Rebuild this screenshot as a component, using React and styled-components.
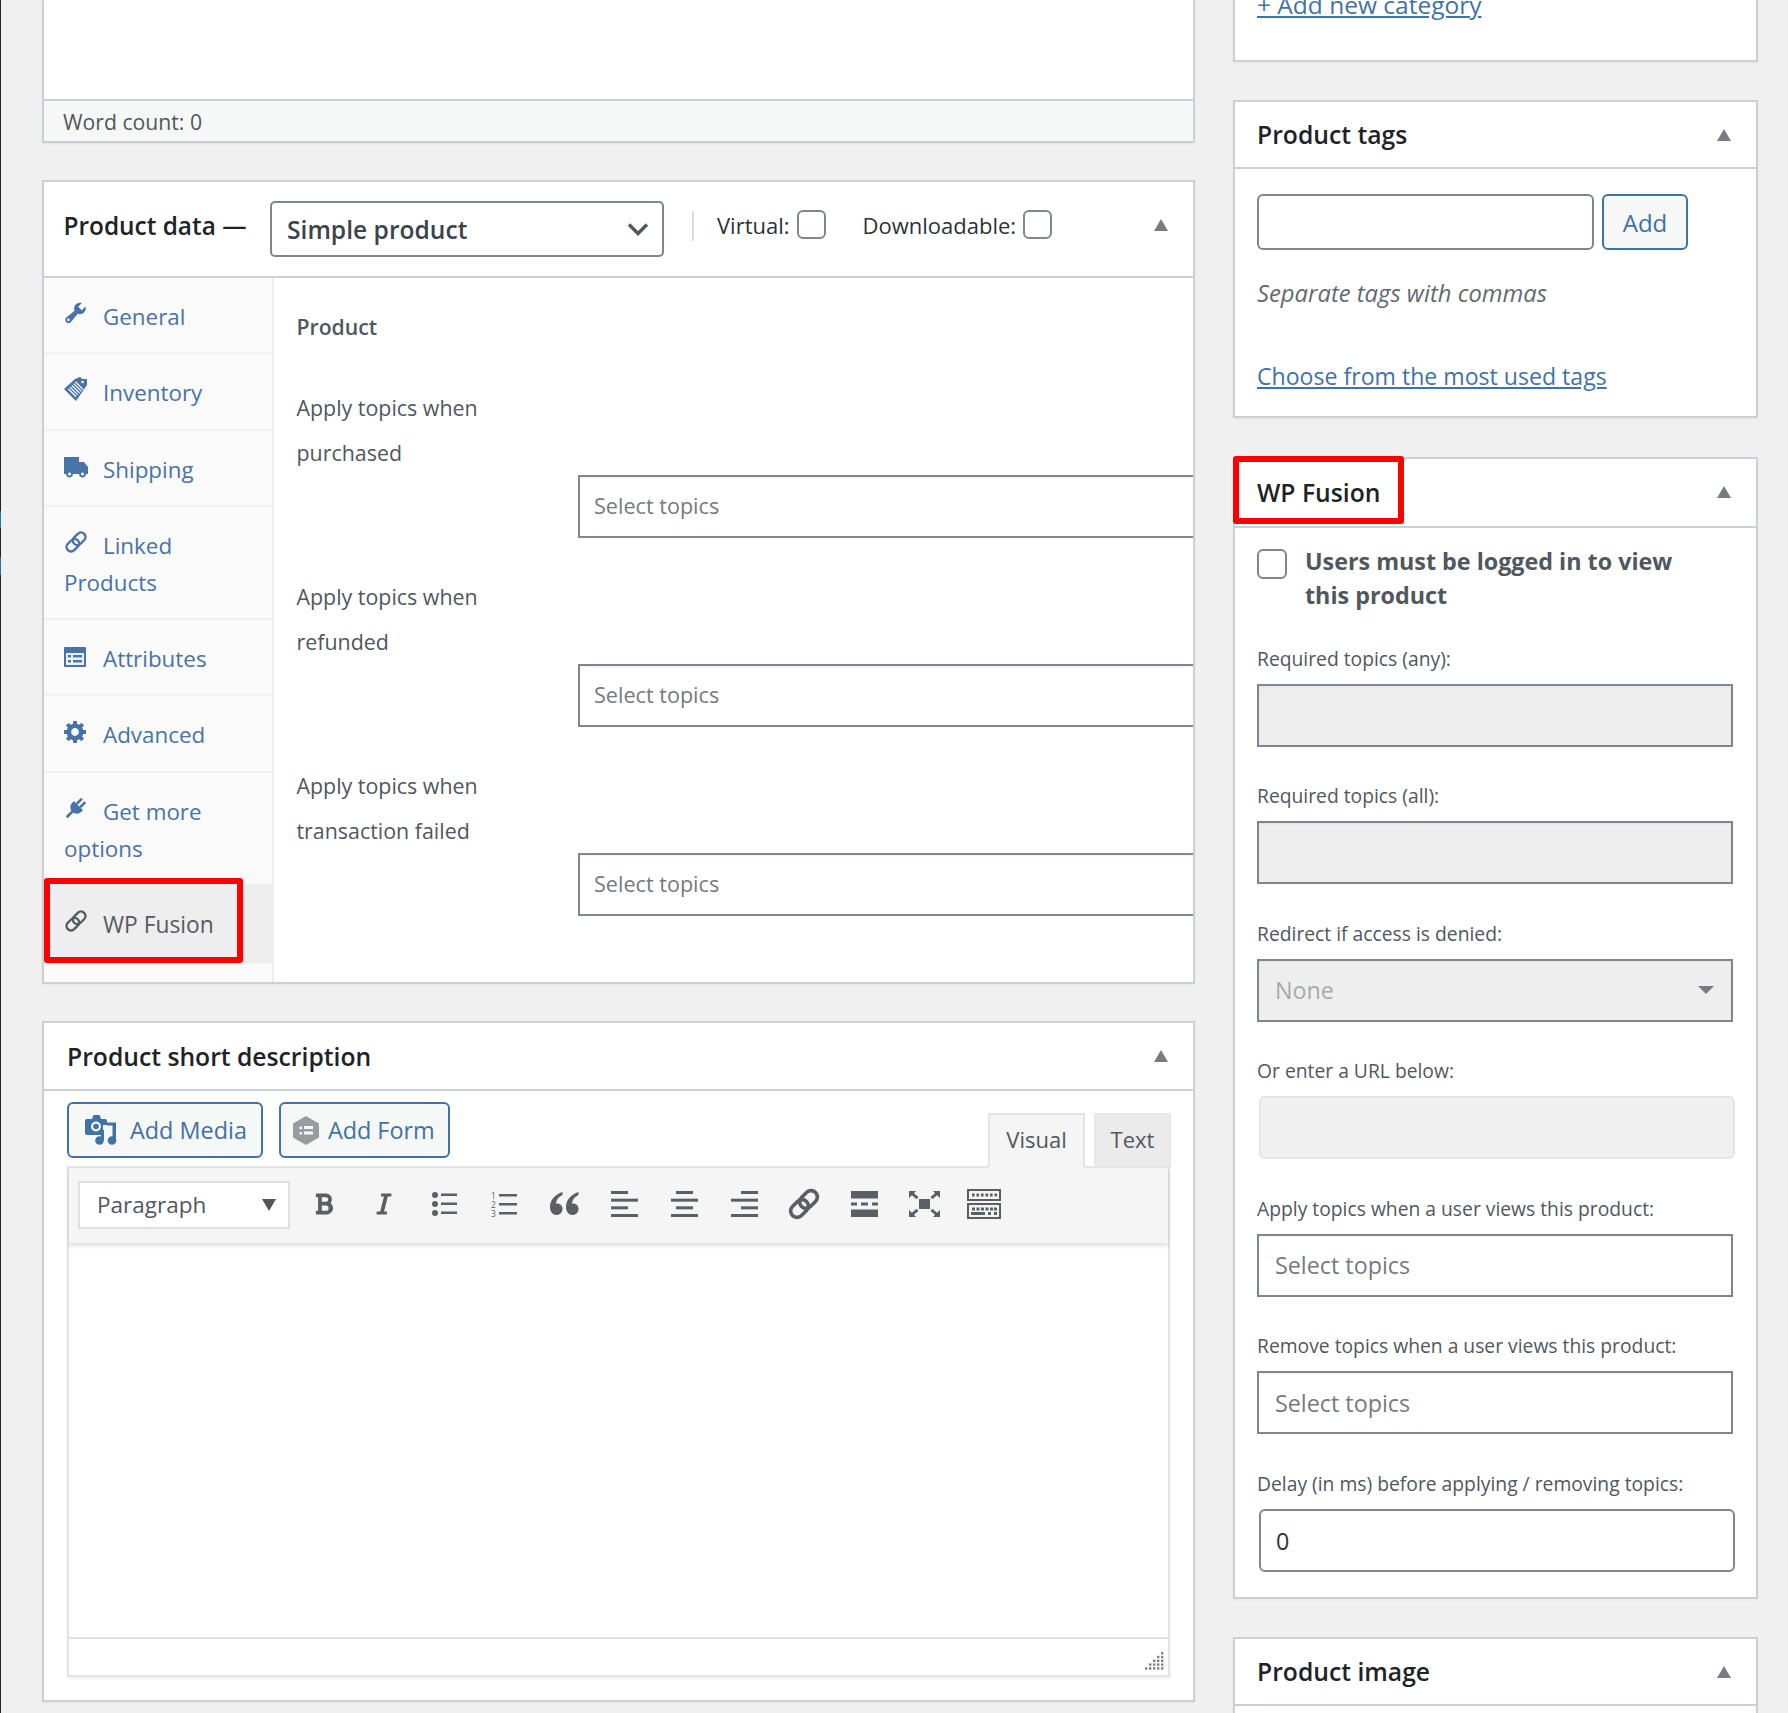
import React from 'react';
import styled, { createGlobalStyle } from 'styled-components';
import { FaBold, FaItalic } from 'react-icons/fa';

const blue = '#3f72a6';
const tabBlue = '#4873a8';
const line = '#ccd0d4';
const field = '#81858f';
const soft = '#e2e3e4';

const GlobalStyle = createGlobalStyle`
  html, body { margin: 0; padding: 0; background: #f0f0f1; }
  body { font-family: "Open Sans", "Noto Sans", sans-serif; color: #50575e; }
  * { box-sizing: border-box; }
`;

const Page = styled.div`
  display: flex;
  width: 1788px;
  height: 1713px;
  overflow: hidden;
  background: #f0f0f1;
`;
const Rail = styled.div`
  display: flex;
  flex-direction: column;
  width: 1px;
  flex: none;
`;
const RailPart = styled.div`
  height: ${p => p.$h}px;
  background: ${p => p.$c};
`;
const MainCol = styled.div`
  width: 1153px;
  margin-left: 41px;
  flex: none;
`;
const SideCol = styled.div`
  width: 525px;
  margin-left: 38px;
  flex: none;
`;
const Panel = styled.section`
  position: relative;
  background: #fff;
  border: 2px solid ${line};
  box-shadow: 0 1px 2px rgba(0, 0, 0, .05);
  margin-bottom: ${p => p.$gap ?? 37}px;
`;
const TopPanel = styled(Panel)`
  border-top: 0;
`;
const BlankEditor = styled.div`
  height: 99px;
  background: #fff;
`;
const WordCount = styled.div`
  height: 42px;
  display: flex;
  align-items: center;
  padding-left: 19px;
  background: #f6f7f7;
  border-top: 2px solid ${line};
  font-size: 21.2px;
  color: #50575e;
`;
const PanelHeader = styled.header`
  display: flex;
  align-items: center;
  justify-content: space-between;
  height: ${p => p.$h}px;
  padding: 0 25px 0 ${p => p.$pl}px;
  box-sizing: content-box;
  border-bottom: 2px solid ${line};
`;
const Title = styled.h2`
  margin: 0;
  padding-top: 1px;
  font-size: 24.7px;
  font-weight: 600;
  color: #1d2327;
  line-height: 32px;
`;
const Triangle = styled.span`
  display: block;
  flex: none;
  width: 0;
  height: 0;
  border-left: ${p => p.$w / 2}px solid transparent;
  border-right: ${p => p.$w / 2}px solid transparent;
  ${p => (p.$down ? 'border-top' : 'border-bottom')}: ${p => p.$t}px solid ${p => p.$c || '#787c82'};
`;
const DataHeader = styled.header`
  display: flex;
  align-items: center;
  height: 94px;
  padding-left: 19.5px;
  box-sizing: content-box;
  border-bottom: 2px solid ${line};
`;
const DataTitle = styled(Title)`
  width: 206.5px;
  flex: none;
  margin-bottom: 6px;
  padding-top: 0;
  font-size: 24.4px;
`;
const TypeSelect = styled.div`
  display: flex;
  align-items: center;
  justify-content: space-between;
  width: 394px;
  height: 56px;
  flex: none;
  padding: 0 13px 0 15px;
  border: 2px solid ${field};
  border-radius: 5px;
  font-size: 24.6px;
  font-weight: 600;
  color: #3c434a;
`;
const Divider = styled.span`
  width: 2px;
  height: 30px;
  flex: none;
  margin: 0 23px 6px 28px;
  background: #dcdcde;
`;
const CheckGroup = styled.label`
  display: flex;
  align-items: center;
  flex: none;
  margin: 0 37px 9px 0;
  font-size: 22px;
  font-weight: 500;
  color: #2c3338;
`;
const CheckBox = styled.input.attrs({ type: 'checkbox' })`
  appearance: none;
  width: ${p => p.$s || 29}px;
  height: ${p => p.$s || 29}px;
  flex: none;
  margin: 0;
  background: #fff;
  border: 2px solid ${field};
  border-radius: 6px;
`;
const VirtualCheck = styled(CheckBox)`
  margin-left: 7px;
`;
const DataToggle = styled.div`
  margin: 0 25px 9px auto;
`;
const DataBody = styled.div`
  display: flex;
  height: 704px;
`;
const Tabs = styled.nav`
  width: 230px;
  flex: none;
  background: #fafafa;
  border-right: 2px solid #eeeeee;
`;
const Tab = styled.div`
  position: relative;
  padding: ${p => (p.$active ? '22px 20px 20px' : '20px 20px 17.3px')};
  background: ${p => (p.$active ? '#eeeeee' : 'transparent')};
  border-bottom: ${p => (p.$last ? '0' : '2px solid #f0f0f0')};
  font-size: ${p => (p.$active ? '22.8px' : '22.4px')};
  line-height: 37px;
  color: ${p => (p.$active ? '#555b61' : tabBlue)};
  margin-right: ${p => (p.$active ? '-2px' : '0')};
`;
const TabIcon = styled.span`
  display: inline-flex;
  align-items: center;
  width: 39px;
  height: 26px;
  vertical-align: 0;
  margin-top: -6px;
`;
const Highlight = styled.span`
  position: absolute;
  border: 6.5px solid #ff0000;
  border-radius: 3px;
  pointer-events: none;
  left: ${p => p.$l}px;
  top: ${p => p.$t}px;
  width: ${p => p.$w}px;
  height: ${p => p.$h}px;
`;
const DataContent = styled.div`
  flex: 1;
  padding-left: 22.5px;
`;
const ContentTitle = styled.h3`
  margin: 30px 0 40px;
  font-size: 21.2px;
  line-height: 38px;
  font-weight: 600;
  color: #50575e;
`;
const TopicRow = styled.div`
  display: grid;
  grid-template-columns: 281.5px 1fr;
  grid-template-rows: 89px 63px;
  margin-bottom: 37px;
`;
const TopicLabel = styled.div`
  grid-column: 1;
  grid-row: 1;
  font-size: 21.4px;
  line-height: 44.6px;
  color: #50575e;
`;
const TopicInput = styled.div`
  grid-column: 2;
  grid-row: 2;
  display: flex;
  align-items: center;
  padding: 0 0 2px 14px;
  border: 2px solid ${field};
  border-right: 0;
  font-size: 21.6px;
  color: #757a80;
  box-shadow: inset 0 1px 2px rgba(0, 0, 0, .06);
`;
const ShortBody = styled.div`
  padding: 11px 23px 23px 23px;
`;
const EditorTools = styled.div`
  display: flex;
  justify-content: space-between;
  align-items: flex-start;
  height: 64px;
`;
const ButtonRow = styled.div`
  display: flex;
  gap: 16px;
`;
const MediaButton = styled.button`
  display: inline-flex;
  align-items: center;
  height: 56px;
  padding: 0 ${p => p.$pr}px 0 ${p => p.$pl}px;
  gap: ${p => p.$gap}px;
  background: #f6f7f7;
  border: 2px solid ${blue};
  border-radius: 6px;
  font-family: inherit;
  font-size: 23.4px;
  color: ${blue};
`;
const ModeTabs = styled.div`
  position: relative;
  z-index: 1;
  display: flex;
  gap: 9px;
  margin: 11px -1px 0 0;
`;
const ModeTab = styled.div`
  display: flex;
  align-items: center;
  justify-content: center;
  width: ${p => p.$w}px;
  height: 55px;
  padding-bottom: 3px;
  font-size: 22px;
  color: #50575e;
  background: ${p => (p.$on ? '#f5f5f5' : '#ebebeb')};
  border: 2px solid ${p => (p.$on ? soft : '#e8e8e8')};
  border-bottom-color: ${p => (p.$on ? '#f5f5f5' : soft)};
`;
const EditorFrame = styled.div`
  border: 2px solid ${soft};
  box-shadow: 0 2px 3px rgba(0, 0, 0, .06);
`;
const Toolbar = styled.div`
  position: relative;
  display: flex;
  align-items: center;
  height: 75px;
  padding: 0 0 2px 9px;
  background: #f5f5f5;
  box-shadow: 0 3px 4px rgba(0, 0, 0, .13);
`;
const FormatSelect = styled.div`
  display: flex;
  align-items: center;
  justify-content: space-between;
  width: 212px;
  height: 48px;
  flex: none;
  margin-right: 4px;
  padding: 0 12px 0 17px;
  background: #fff;
  border: 2px solid #dfdfdf;
  font-size: 22.5px;
  color: #50575e;
`;
const ToolIcon = styled.span`
  display: flex;
  align-items: center;
  justify-content: center;
  width: 60px;
  height: 36px;
  flex: none;
  margin-bottom: 2px;
  color: #5a5f66;
`;
const EditorArea = styled.div`
  height: 394px;
  background: #fff;
`;
const StatusBar = styled.div`
  display: flex;
  justify-content: flex-end;
  align-items: flex-end;
  height: 38px;
  padding: 0 4px 5px 0;
  background: #fff;
  border-top: 2px solid ${soft};
`;
const AddCategory = styled.a`
  display: block;
  margin: -14px 0 0 22px;
  height: 74px;
  font-size: 24.5px;
  line-height: 37px;
  color: ${blue};
  text-decoration: underline;
`;
const TagsBody = styled.div`
  padding: 25px 0 21px 22px;
`;
const TagRow = styled.div`
  display: flex;
  gap: 8px;
`;
const TagInput = styled.div`
  width: 337px;
  height: 56px;
  border: 2px solid ${field};
  border-radius: 6px;
  background: #fff;
`;
const AddButton = styled.button`
  width: 86px;
  height: 56px;
  padding: 0;
  font-family: inherit;
  font-size: 24px;
  color: ${blue};
  background: #f6f7f7;
  border: 2px solid ${blue};
  border-radius: 6px;
`;
const Hint = styled.p`
  margin: 24.5px 0 0;
  font-size: 23.8px;
  line-height: 37px;
  font-style: italic;
  color: #646970;
`;
const TagsLink = styled.a`
  display: block;
  margin-top: 46px;
  font-size: 23.1px;
  line-height: 37px;
  color: ${blue};
  text-decoration: underline;
`;
const FusionBody = styled.div`
  padding: 16px 20px 25px 22px;
`;
const LoginRow = styled.label`
  display: flex;
  gap: 18px;
  margin-bottom: 34px;
  font-size: 23.3px;
  font-weight: 700;
  line-height: 34px;
  color: #50575e;
`;
const LoginCheck = styled(CheckBox)`
  margin-top: 5px;
`;
const Field = styled.div`
  margin-bottom: 36.6px;
  &:last-child { margin-bottom: 0; }
`;
const FieldLabel = styled.div`
  height: 26px;
  margin-bottom: 12px;
  font-size: 19.3px;
  line-height: 26px;
  white-space: nowrap;
  color: #50575e;
`;
const BoxField = styled.div`
  display: flex;
  align-items: center;
  justify-content: space-between;
  width: 476px;
  height: 63px;
  padding: 0 17px 0 16px;
  background: ${p => (p.$off ? '#eeeeee' : '#fff')};
  border: 2px solid ${field};
  font-size: 23.3px;
  color: ${p => (p.$off ? '#a7aaad' : '#757a80')};
  box-shadow: inset 0 1px 2px rgba(0, 0, 0, .05);
`;
const RoundField = styled.div`
  display: flex;
  align-items: center;
  width: 476px;
  height: 63px;
  margin-left: 2px;
  padding-left: 15px;
  background: ${p => (p.$off ? '#f0f0f1' : '#fff')};
  border: 2px solid ${p => (p.$off ? '#e3e4e5' : field)};
  border-radius: 6px;
  font-size: 23.3px;
  color: #2c3338;
`;
const ImageBody = styled.div`
  height: 40px;
`;

const Svg = ({ w, h, vb, children, color = 'currentColor' }) => (
  <svg width={w} height={h} viewBox={vb || `0 0 ${w} ${h}`} fill={color} xmlns="http://www.w3.org/2000/svg">
    {children}
  </svg>
);

const Chain = ({ s, sw = 2.4, c = tabBlue }) => (
  <svg width={s} height={s} viewBox="0 0 24 24" fill="none" stroke={c} strokeWidth={sw}>
    <g transform="rotate(-45 12 12)">
      <rect x="0.5" y="7.5" width="14" height="9" rx="4.5" />
      <rect x="9.5" y="7.5" width="14" height="9" rx="4.5" />
    </g>
  </svg>
);
const Wrench = () => (
  <Svg w={23} h={23} vb="1 2 18 17" color={tabBlue}>
    <path d="M16.68 9.77c-1.34 1.34-3.3 1.67-4.95.99l-5.41 6.52c-.99.99-2.59.99-3.58 0s-.99-2.59 0-3.58l6.52-5.42c-.68-1.65-.35-3.61.99-4.95 1.28-1.28 3.12-1.62 4.72-1.06l-2.89 2.89 2.82 2.82 2.86-2.87c.53 1.58.18 3.39-1.08 4.66zM3.81 16.21c.4.39 1.04.39 1.43 0 .4-.4.4-1.04 0-1.43-.39-.4-1.03-.4-1.43 0-.39.39-.39 1.03 0 1.43z" />
  </Svg>
);
const InventoryIcon = () => (
  <Svg w={24} h={24} color={tabBlue}>
    <path d="M0 12 11 2l5-2 2.500 2H23v6L12 24z" />
    <g transform="rotate(45 11.500 12.500)" fill="#fff">
      <rect x="6" y="6.500" width="11" height="1.300" />
      <rect x="6" y="9" width="11" height="1.300" />
      <rect x="6" y="11.500" width="11" height="1.300" />
      <rect x="6" y="14" width="11" height="1.300" />
      <rect x="6" y="16.500" width="11" height="1.300" />
    </g>
    <circle cx="18.500" cy="5" r="1.300" fill="#fff" />
  </Svg>
);
const Truck = () => (
  <Svg w={24} h={21} color={tabBlue}>
    <path d="M0 0h15v5h5l4 5v7H0z" />
    <circle cx="5.500" cy="17" r="3.400" />
    <circle cx="18.500" cy="17" r="3.400" />
    <circle cx="5.500" cy="17" r="1.600" fill="#fff" />
    <circle cx="18.500" cy="17" r="1.600" fill="#fff" />
  </Svg>
);
const AttributesIcon = () => (
  <Svg w={22} h={20} color={tabBlue}>
    <rect width="22" height="20" rx="1" />
    <rect x="2" y="6" width="18" height="12" fill="#eaf0f6" />
    <rect x="4" y="8" width="3" height="2.400" />
    <rect x="4" y="13" width="3" height="2.400" />
    <rect x="9" y="8" width="9" height="2.400" />
    <rect x="9" y="13" width="9" height="2.400" />
  </Svg>
);
const Gear = () => (
  <Svg w={22} h={22} vb="1 2 17 17" color={tabBlue}>
    <path d="M18 12h-2.180c-.17.7-.44 1.350-.81 1.930l1.540 1.540-2.100 2.100-1.540-1.540c-.58.36-1.230.63-1.910.79V19H8v-2.180c-.68-.16-1.330-.43-1.910-.79l-1.540 1.540-2.120-2.120 1.540-1.540c-.36-.58-.63-1.230-.79-1.910H1V9.030h2.170c.16-.7.44-1.350.8-1.940L2.430 5.550l2.100-2.100 1.540 1.540c.58-.37 1.240-.64 1.930-.81V2h3v2.180c.68.16 1.330.43 1.910.79l1.540-1.540 2.120 2.120-1.540 1.540c.36.59.64 1.240.8 1.940H18V12zm-8.500 1.500c1.660 0 3-1.340 3-3s-1.340-3-3-3-3 1.340-3 3 1.340 3 3 3z" />
  </Svg>
);
const Plug = () => (
  <Svg w={23} h={23} vb="-2 -2 25 25" color={tabBlue}>
    <g transform="rotate(45 10.500 10.500)">
      <rect x="6.500" y="-2" width="2.800" height="8" />
      <rect x="11.700" y="-2" width="2.800" height="8" />
      <path d="M3.500 6h14v2.500a7 7 0 0 1-14 0z" />
      <rect x="9" y="14" width="3" height="10" />
    </g>
  </Svg>
);
const MediaIcon = () => (
  <Svg w={32} h={30} color={blue}>
    <path d="M2 4h5l1.500-4h6l1.500 4h4a2 2 0 0 1 2 2v12a2 2 0 0 1-2 2H2a2 2 0 0 1-2-2V6a2 2 0 0 1 2-2z" />
    <circle cx="11" cy="11.500" r="5" fill="#f6f7f7" />
    <circle cx="11" cy="11.500" r="2.800" />
    <path d="M18 10h14v20h-6l-2-5h-6z" fill="#f6f7f7" />
    <rect x="27.500" y="8" width="3.500" height="18" />
    <rect x="22" y="7.500" width="9" height="3" />
    <circle cx="27" cy="25.500" r="4.300" />
    <circle cx="14.500" cy="25.500" r="4.300" />
    <rect x="16" y="15" width="3" height="10" />
  </Svg>
);
const FormIcon = () => (
  <Svg w={26} h={29} color="#999b9e">
    <path d="M13 0l13 7.500v14L13 29 0 21.500v-14z" />
    <rect x="6.500" y="10.500" width="2.500" height="2.500" fill="#f6f7f7" />
    <rect x="6.500" y="16" width="2.500" height="2.500" fill="#f6f7f7" />
    <rect x="11" y="10" width="9" height="3" fill="#f6f7f7" />
    <rect x="11" y="15.500" width="9" height="3" fill="#f6f7f7" />
  </Svg>
);
const Chevron = () => (
  <svg width="22" height="14" viewBox="0 0 22 14" fill="none" stroke="#50575e" strokeWidth="3.400">
    <path d="M2 2.500l9 9 9-9" />
  </svg>
);
const Bars = ({ rows }) => (
  <Svg w={27} h={26}>
    {rows.map(([x, w], i) => (
      <rect key={i} x={x} y={i * 7.670} width={w} height={3} />
    ))}
  </Svg>
);
const ListU = () => (
  <Svg w={25} h={24}>
    <circle cx="3" cy="3" r="3" />
    <circle cx="3" cy="12" r="3" />
    <circle cx="3" cy="21" r="3" />
    <rect x="9" y="1.500" width="16" height="2.500" />
    <rect x="9" y="10.500" width="16" height="2.500" />
    <rect x="9" y="19.500" width="16" height="2.500" />
  </Svg>
);
const ListO = () => (
  <Svg w={26} h={26}>
    <text x="0" y="7.500" fontSize="8.500" fontFamily="Open Sans, sans-serif">1</text>
    <text x="0" y="16.500" fontSize="8.500" fontFamily="Open Sans, sans-serif">2</text>
    <text x="0" y="25.500" fontSize="8.500" fontFamily="Open Sans, sans-serif">3</text>
    <rect x="8" y="3" width="18" height="2.500" />
    <rect x="8" y="12" width="18" height="2.500" />
    <rect x="8" y="21" width="18" height="2.500" />
  </Svg>
);
const Quote = () => (
  <Svg w={29} h={23}>
    <path d="M12.500 0C5 2.500 0 8 0 15c0 4.500 2.600 8 6.500 8 3.300 0 6-2.500 6-6 0-3.200-2.200-5.500-5.200-5.500-.7 0-1.200.1-1.500.2C6.500 7.500 9 4.500 12.500 3z" />
    <path d="M28.500 0C21 2.500 16 8 16 15c0 4.500 2.600 8 6.500 8 3.300 0 6-2.500 6-6 0-3.200-2.200-5.500-5.200-5.500-.7 0-1.200.1-1.500.2.700-4.200 3.200-7.200 6.700-8.700z" />
  </Svg>
);
const More = () => (
  <Svg w={27} h={26}>
    <rect width="27" height="7.500" />
    <rect y="11.500" width="6" height="3" />
    <rect x="10" y="11.500" width="7" height="3" />
    <rect x="21" y="11.500" width="6" height="3" />
    <rect y="18.500" width="27" height="7.500" />
  </Svg>
);
const FullScreen = () => (
  <Svg w={31} h={26}>
    <rect x="10" y="8" width="11" height="10" />
    <path d="M0 0h7L5 2.300l4.500 3.800-2 2.100L3 4.300 0 7zM31 0h-7l2 2.300-4.500 3.800 2 2.100L28 4.300 31 7zM0 26h7l-2-2.300 4.500-3.800-2-2.100L3 21.700 0 19zM31 26h-7l2-2.300-4.500-3.800 2-2.100 4.500 3.900 3-2.700z" />
  </Svg>
);
const KitchenSink = () => (
  <Svg w={34} h={30}>
    <path fillRule="evenodd" d="M0 0h34v12H0zM2 2v8h30V2zM0 14h34v16H0zM2 16v12h30V16z" />
    {[5, 9.500, 14, 18.500, 23, 27.500].map(x => <rect key={x} x={x} y="4.500" width="2.600" height="3" />)}
    {[5, 9.500, 14, 18.500, 23].map(x => <rect key={x} x={x} y="18.500" width="3" height="3" />)}
    <rect x="27" y="18.500" width="3" height="3" />
    <rect x="4" y="23" width="14" height="3" />
    <rect x="21" y="23" width="3" height="3" />
    <rect x="27" y="23" width="3" height="3" />
  </Svg>
);
const Grip = () => (
  <Svg w={19} h={18}>
    {[0, 1, 2, 3, 4].flatMap(r =>
      [0, 1, 2, 3, 4].filter(c => c >= 4 - r).map(c => (
        <rect key={`${r}${c}`} x={c * 4} y={r * 3.800} width="2.400" height="2.400" fill="#7d8288" />
      ))
    )}
  </Svg>
);

const tabs = [
  { label: 'General', icon: <Wrench /> },
  { label: 'Inventory', icon: <InventoryIcon /> },
  { label: 'Shipping', icon: <Truck /> },
  { label: 'Linked Products', icon: <Chain s={24} /> },
  { label: 'Attributes', icon: <AttributesIcon /> },
  { label: 'Advanced', icon: <Gear /> },
  { label: 'Get more options', icon: <Plug />, last: true },
];

const topicRows = [
  ['Apply topics when', 'purchased'],
  ['Apply topics when', 'refunded'],
  ['Apply topics when', 'transaction failed'],
];

const tools = [
  <FaBold size={24} />,
  <FaItalic size={24} />,
  <ListU />,
  <ListO />,
  <Quote />,
  <Bars rows={[[0, 17], [0, 27], [0, 17], [0, 27]]} />,
  <Bars rows={[[5, 17], [0, 27], [5, 17], [0, 27]]} />,
  <Bars rows={[[10, 17], [0, 27], [10, 17], [0, 27]]} />,
  <Chain s={34} sw={2.600} c="#5a5f66" />,
  <More />,
  <FullScreen />,
  <KitchenSink />,
];

export default function App() {
  return (
    <Page>
      <GlobalStyle />
      <Rail>
        <RailPart $h={511} $c="#1d2327" />
        <RailPart $h={17} $c="#2271b1" />
        <RailPart $h={29} $c="#1d2327" />
        <RailPart $h={18} $c="#2271b1" />
        <RailPart $h={1138} $c="#1d2327" />
      </Rail>

      <MainCol>
        <TopPanel>
          <BlankEditor />
          <WordCount>Word count: 0</WordCount>
        </TopPanel>

        <Panel>
          <DataHeader>
            <DataTitle>Product data —</DataTitle>
            <TypeSelect>Simple product<Chevron /></TypeSelect>
            <Divider />
            <CheckGroup>Virtual:<VirtualCheck /></CheckGroup>
            <CheckGroup>Downloadable:<VirtualCheck /></CheckGroup>
            <DataToggle><Triangle $w={15} $t={12} /></DataToggle>
          </DataHeader>
          <DataBody>
            <Tabs>
              {tabs.map(t => (
                <Tab key={t.label} $last={t.last}>
                  <TabIcon>{t.icon}</TabIcon>{t.label}
                </Tab>
              ))}
              <Tab $active $last>
                <TabIcon><Chain s={24} c="#555b61" /></TabIcon>WP Fusion
                <Highlight $l={0} $t={-6} $w={199} $h={85} />
              </Tab>
            </Tabs>
            <DataContent>
              <ContentTitle>Product</ContentTitle>
              {topicRows.map(([a, b], i) => (
                <TopicRow key={i}>
                  <TopicLabel>{a}<br />{b}</TopicLabel>
                  <TopicInput>Select topics</TopicInput>
                </TopicRow>
              ))}
            </DataContent>
          </DataBody>
        </Panel>

        <Panel>
          <PanelHeader $h={66} $pl={23}>
            <Title>Product short description</Title>
            <Triangle $w={15} $t={12} />
          </PanelHeader>
          <ShortBody>
            <EditorTools>
              <ButtonRow>
                <MediaButton $pl={16} $pr={14} $gap={13}><MediaIcon />Add Media</MediaButton>
                <MediaButton $pl={12} $pr={13} $gap={9}><FormIcon />Add Form</MediaButton>
              </ButtonRow>
              <ModeTabs>
                <ModeTab $on $w={97}>Visual</ModeTab>
                <ModeTab $w={77}>Text</ModeTab>
              </ModeTabs>
            </EditorTools>
            <EditorFrame>
              <Toolbar>
                <FormatSelect>Paragraph<Triangle $down $w={14} $t={12} $c="#50575e" /></FormatSelect>
                {tools.map((icon, i) => <ToolIcon key={i}>{icon}</ToolIcon>)}
              </Toolbar>
              <EditorArea />
              <StatusBar><Grip /></StatusBar>
            </EditorFrame>
          </ShortBody>
        </Panel>
      </MainCol>

      <SideCol>
        <TopPanel $gap={38}>
          <AddCategory>+ Add new category</AddCategory>
        </TopPanel>

        <Panel $gap={39}>
          <PanelHeader $h={65} $pl={22}>
            <Title>Product tags</Title>
            <Triangle $w={15} $t={12} />
          </PanelHeader>
          <TagsBody>
            <TagRow>
              <TagInput />
              <AddButton>Add</AddButton>
            </TagRow>
            <Hint>Separate tags with commas</Hint>
            <TagsLink>Choose from the most used tags</TagsLink>
          </TagsBody>
        </Panel>

        <Panel $gap={38}>
          <PanelHeader $h={67} $pl={22}>
            <Title>WP Fusion</Title>
            <Triangle $w={15} $t={12} />
          </PanelHeader>
          <Highlight $l={-2} $t={-3} $w={171} $h={68} />
          <FusionBody>
            <LoginRow>
              <LoginCheck $s={30} />
              <span>Users must be logged in to view<br />this product</span>
            </LoginRow>
            <Field>
              <FieldLabel>Required topics (any):</FieldLabel>
              <BoxField $off />
            </Field>
            <Field>
              <FieldLabel>Required topics (all):</FieldLabel>
              <BoxField $off />
            </Field>
            <Field>
              <FieldLabel>Redirect if access is denied:</FieldLabel>
              <BoxField $off>None<Triangle $down $w={16} $t={8} /></BoxField>
            </Field>
            <Field>
              <FieldLabel>Or enter a URL below:</FieldLabel>
              <RoundField $off />
            </Field>
            <Field>
              <FieldLabel>Apply topics when a user views this product:</FieldLabel>
              <BoxField>Select topics</BoxField>
            </Field>
            <Field>
              <FieldLabel>Remove topics when a user views this product:</FieldLabel>
              <BoxField>Select topics</BoxField>
            </Field>
            <Field>
              <FieldLabel>Delay (in ms) before applying / removing topics:</FieldLabel>
              <RoundField>0</RoundField>
            </Field>
          </FusionBody>
        </Panel>

        <Panel>
          <PanelHeader $h={65} $pl={22}>
            <Title>Product image</Title>
            <Triangle $w={15} $t={12} />
          </PanelHeader>
          <ImageBody />
        </Panel>
      </SideCol>
    </Page>
  );
}
